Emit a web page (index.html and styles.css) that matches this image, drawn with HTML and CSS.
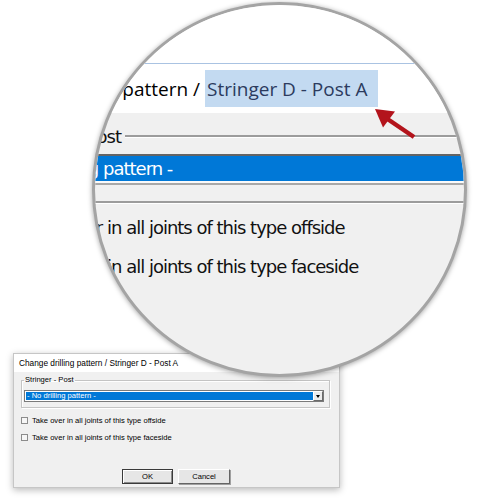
FILE: index.html
```html
<!DOCTYPE html>
<html>
<head>
<meta charset="utf-8">
<link rel="stylesheet" href="styles.css">
</head>
<body>
<div class="stage">
  <div class="dialog">
    <div class="titlebar">Change drilling pattern / Stringer D - Post A</div>
    <div class="dlg-body">
      <fieldset class="group">
        <legend>Stringer - Post</legend>
        <div class="combo">
          <div class="combo-field"><span class="combo-text">- No drilling pattern -</span></div>
          <div class="combo-btn"><span class="tri"></span></div>
        </div>
      </fieldset>
      <div class="check"><span class="box"></span><span>Take over in all joints of this type offside</span></div>
      <div class="check check2"><span class="box"></span><span>Take over in all joints of this type faceside</span></div>
      <div class="buttons"><span class="btn btn-default">OK</span><span class="btn">Cancel</span></div>
    </div>
  </div>

  <div class="lens">
    <div class="z-top"></div>
    <div class="z-title">
      <div class="z-anchor z-anchor-title"><span class="z-pre">Change drilling pattern / </span></div>
      <span class="z-hl">Stringer D - Post A</span>
    </div>
    <div class="z-body">
      <div class="z-legend-row">
        <div class="z-anchor z-anchor-legend"><span class="z-pre">Stringer - Post</span></div>
        <div class="z-line"></div>
      </div>
      <div class="z-combo">
        <div class="z-field">
          <div class="z-anchor z-anchor-combo"><span class="z-pre">- No drilling </span></div>
          <span class="z-field-text">pattern -</span>
        </div>
      </div>
      <div class="z-group-bottom"></div>
      <div class="z-check">
        <div class="z-anchor z-anchor-check"><span class="z-pre">Take over </span></div>
        <span>in all joints of this type offside</span>
      </div>
      <div class="z-check z-check2">
        <div class="z-anchor z-anchor-check"><span class="z-pre">Take over </span></div>
        <span>in all joints of this type faceside</span>
      </div>
    </div>
  </div>

  <svg class="arrow" width="500" height="501" viewBox="0 0 500 501">
    <line x1="414" y1="137" x2="386" y2="118" stroke="#b3141c" stroke-width="4.5"/>
    <polygon points="375,109 395,111.5 383,127.5" fill="#b3141c"/>
  </svg>
</div>
</body>
</html>
```

FILE: styles.css
```css
html, body {
  margin: 0;
  padding: 0;
  background: #ffffff;
}
.stage {
  position: relative;
  width: 500px;
  height: 501px;
  overflow: hidden;
  padding: 353px 0 0 13px;
  box-sizing: border-box;
}

/* ---------- small dialog ---------- */
.dialog {
  width: 327px;
  height: 135px;
  box-sizing: border-box;
  border: 1px solid #c6c6c6;
  box-shadow: 0 2px 7px rgba(0, 0, 0, 0.28);
  background: #f0f0f0;
  font-family: "Liberation Sans", Arial, sans-serif;
  color: #000;
}
.titlebar {
  height: 18px;
  line-height: 18px;
  background: #ffffff;
  padding-left: 5px;
  font-size: 8.3px;
  white-space: nowrap;
}
.dlg-body {
  padding: 0;
  font-size: 7.6px;
}
.group {
  margin: 3px 9px 0 7px;
  padding: 0 5px 5px 2px;
  border: 1px solid #c4c4c4;
  box-shadow: inset 1px 1px 0 #ffffff, 1px 1px 0 #ffffff;
}
.group legend {
  padding: 0 1px;
  line-height: 10px;
  font-size: 7.6px;
  margin-left: 0;
}
.combo {
  margin-top: 5px;
  height: 12px;
  box-sizing: border-box;
  border: 1px solid #7a7a7a;
  background: #ffffff;
  display: flex;
  padding: 1px 0 1px 1px;
}
.combo-field {
  flex: 1;
  background: #0078d7;
  color: #ffffff;
  display: flex;
  align-items: center;
  padding-left: 1px;
  white-space: nowrap;
}
.combo-text {
  line-height: 8px;
}
.combo-btn {
  width: 10px;
  margin-top: -1px;
  margin-bottom: -1px;
  box-sizing: border-box;
  background: #ececec;
  border-left: 1px solid #ffffff;
  border-right: 1px solid #6a6a6a;
  border-bottom: 1px solid #6a6a6a;
  border-top: 1px solid #ffffff;
  display: flex;
  align-items: center;
  justify-content: center;
}
.tri {
  width: 0;
  height: 0;
  border-left: 2.5px solid transparent;
  border-right: 2.5px solid transparent;
  border-top: 3px solid #000;
}
.check {
  display: flex;
  align-items: center;
  height: 12px;
  margin-top: 6px;
  padding-left: 7px;
  white-space: nowrap;
}
.check2 {
  margin-top: 5px;
}
.box {
  width: 7px;
  height: 7px;
  box-sizing: border-box;
  border: 1px solid #8c8c8c;
  background: #f6f6f6;
  margin-right: 4px;
}
.buttons {
  display: flex;
  gap: 5px;
  margin-top: 26px;
  padding-left: 108px;
}
.btn {
  height: 15px;
  box-sizing: border-box;
  display: flex;
  align-items: center;
  justify-content: center;
  background: #e6e6e6;
  border: 1px solid;
  border-color: #ffffff #646464 #646464 #ffffff;
  box-shadow: 1px 1px 0 #a0a0a0;
  width: 52px;
}
.btn-default {
  width: 51px;
  border-color: #3a3a3a;
  box-shadow: inset 1px 1px 0 #ffffff, inset -1px -1px 0 #8a8a8a;
}

/* ---------- magnifier lens ---------- */
.lens {
  position: absolute;
  left: 92px;
  top: 2px;
  width: 375px;
  height: 375px;
  box-sizing: border-box;
  border: 3px solid #a4a4a4;
  border-radius: 50%;
  overflow: hidden;
  background: #f0f0f0;
  box-shadow: 0 1px 5px rgba(0, 0, 0, 0.35);
  z-index: 2;
}
.z-top {
  height: 58px;
  background: #ffffff;
  border-bottom: 1px solid #aac3e2;
}
.z-title {
  height: 49px;
  background: #ffffff;
  display: flex;
  align-items: center;
  font-family: "Open Sans", "Noto Sans", sans-serif;
  font-size: 19px;
  color: #000;
}
.z-anchor {
  display: flex;
  justify-content: flex-end;
  flex: none;
  white-space: pre;
}
.z-pre {
  flex: none;
  white-space: pre;
}
.z-anchor-title {
  width: 110px;
}
.z-hl {
  height: 37px;
  display: flex;
  align-items: center;
  padding: 0 10px 0 2px;
  background: #c3daf1;
  color: #2c3b5e;
  white-space: nowrap;
}
.z-body {
  font-family: "DejaVu Sans", Verdana, sans-serif;
  font-size: 18px;
  letter-spacing: -1px;
  color: #111;
}
.z-legend-row {
  display: flex;
  height: 24px;
  line-height: 24px;
  margin-top: 12px;
}
.z-anchor-legend {
  width: 26px;
}
.z-line {
  flex: 1;
  margin-left: 4px;
  margin-top: 10px;
  height: 0;
  border-top: 2px solid #9c9c9c;
  border-bottom: 1px solid #ffffff;
}
.z-combo {
  margin-top: 5px;
  border-top: 2px solid #646464;
  border-bottom: 2px solid #a8a8a8;
  padding-bottom: 2px;
  background: #fafafa;
}
.z-field {
  height: 25px;
  line-height: 25px;
  background: #0078d7;
  color: #ffffff;
  display: flex;
  white-space: nowrap;
}
.z-anchor-combo {
  width: 8px;
}
.z-group-bottom {
  margin-top: 16px;
  border-top: 2px solid #9c9c9c;
  border-bottom: 1px solid #ffffff;
}
.z-check {
  display: flex;
  height: 24px;
  line-height: 24px;
  margin-top: 12px;
  white-space: nowrap;
}
.z-check2 {
  margin-top: 14.5px;
}
.z-anchor-check {
  width: 12px;
}

/* ---------- arrow ---------- */
.arrow {
  position: absolute;
  left: 0;
  top: 0;
  z-index: 3;
  pointer-events: none;
}
```
